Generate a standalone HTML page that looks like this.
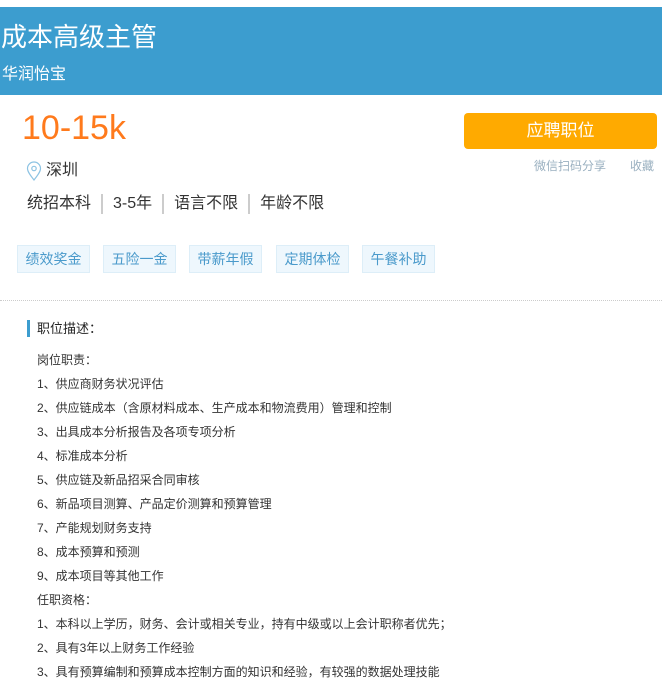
<!DOCTYPE html>
<html><head><meta charset="utf-8"><style>
*{margin:0;padding:0;box-sizing:border-box}
body{width:662px;height:691px;background:#fff;font-family:"Liberation Sans","Noto Sans CJK SC",sans-serif;position:relative;overflow:hidden;color:#333}
.hd{position:absolute;top:7px;left:0;width:662px;height:88px;background:#3c9dcf;color:#fff}
.t1{position:absolute;left:1px;top:14px;font-size:26px;line-height:32px}
.t2{position:absolute;left:2px;top:58px;font-size:16px;line-height:20px}
.sal{position:absolute;left:22px;top:108px;font-size:34px;line-height:40px;color:#ff7a1c}
.btn{position:absolute;left:464px;top:113px;width:193px;height:36px;background:#ffaa00;border-radius:4px;color:#fff;font-size:17px;text-align:center;line-height:36px}
.sh{position:absolute;top:157px;font-size:12px;color:#9ab0c0}
.loc{position:absolute;left:26px;top:160px;font-size:16px;line-height:22px;color:#333}
.req{position:absolute;left:27px;top:193px;font-size:16px;line-height:22px;color:#333}
.req i{display:inline-block;width:2px;height:20px;background:#ccc;vertical-align:middle;margin:0 10px}
.tag{position:absolute;top:245px;width:73px;height:28px;background:#eef7fd;border:1px solid #ddeef8;color:#4a9acb;font-size:14px;text-align:center;line-height:26px}
.hr{position:absolute;left:0;top:300px;width:662px;border-top:1px dotted #ccc}
.sec{position:absolute;left:27px;top:320px;border-left:3px solid #3c9dcf;padding-left:7px;font-size:13px;line-height:17px;color:#222}
.ln{position:absolute;left:37px;font-size:12px;line-height:16px;color:#333;white-space:nowrap}
</style></head><body>
<div class="hd"><div class="t1">成本高级主管</div><div class="t2">华润怡宝</div></div>
<div class="sal">10-15k</div>
<div class="btn">应聘职位</div>
<div class="sh" style="left:534px">微信扫码分享</div>
<div class="sh" style="left:630px">收藏</div>
<svg style="position:absolute;left:26px;top:161px" width="16" height="20" viewBox="0 0 16 20"><path d="M8 19C4 14 1.5 10.5 1.5 7.5a6.5 6.5 0 0 1 13 0C14.5 10.5 12 14 8 19z" fill="none" stroke="#8cc3e3" stroke-width="1.2"/><circle cx="8" cy="7.5" r="2.2" fill="none" stroke="#8cc3e3" stroke-width="1.2"/></svg>
<div class="loc" style="left:46px">深圳</div>
<div class="req">统招本科<i></i>3-5年<i></i>语言不限<i></i>年龄不限</div>
<div class="tag" style="left:17px">绩效奖金</div>
<div class="tag" style="left:103px">五险一金</div>
<div class="tag" style="left:189px">带薪年假</div>
<div class="tag" style="left:276px">定期体检</div>
<div class="tag" style="left:362px">午餐补助</div>
<div class="hr"></div>
<div class="sec">职位描述：</div>
<div class="ln" style="top:352px">岗位职责：</div>
<div class="ln" style="top:376px">1、供应商财务状况评估</div>
<div class="ln" style="top:400px">2、供应链成本（含原材料成本、生产成本和物流费用）管理和控制</div>
<div class="ln" style="top:424px">3、出具成本分析报告及各项专项分析</div>
<div class="ln" style="top:448px">4、标准成本分析</div>
<div class="ln" style="top:472px">5、供应链及新品招采合同审核</div>
<div class="ln" style="top:496px">6、新品项目测算、产品定价测算和预算管理</div>
<div class="ln" style="top:520px">7、产能规划财务支持</div>
<div class="ln" style="top:544px">8、成本预算和预测</div>
<div class="ln" style="top:568px">9、成本项目等其他工作</div>
<div class="ln" style="top:592px">任职资格：</div>
<div class="ln" style="top:616px">1、本科以上学历，财务、会计或相关专业，持有中级或以上会计职称者优先；</div>
<div class="ln" style="top:640px">2、具有3年以上财务工作经验</div>
<div class="ln" style="top:664px">3、具有预算编制和预算成本控制方面的知识和经验，有较强的数据处理技能</div>
</body></html>
